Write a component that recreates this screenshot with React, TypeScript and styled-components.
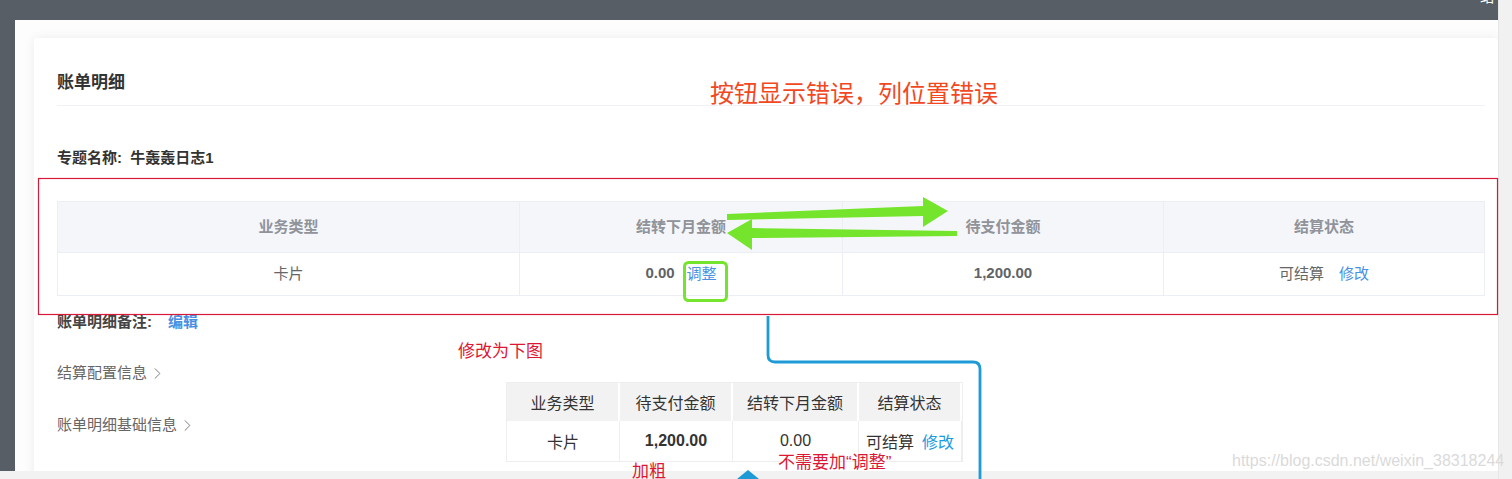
import React from "react";
import styled, { createGlobalStyle } from "styled-components";
import { ChevronRight } from "lucide-react";

const GlobalStyle = createGlobalStyle`
  html, body {
    margin: 0;
    padding: 0;
    overflow: hidden;
    background: #f2f2f2;
  }
  * {
    box-sizing: border-box;
  }
`;

const FONT = `"Liberation Sans", "Noto Sans CJK SC", sans-serif`;

const Page = styled.div`
  position: relative;
  display: grid;
  grid-template-columns: 1fr 14px;
  width: 1512px;
  height: 479px;
  overflow: hidden;
  font-family: ${FONT};
  background: #f2f2f2;
`;

const Main = styled.div`
  display: flex;
  flex-direction: column;
  min-width: 0;
`;

const TopBar = styled.div`
  height: 20px;
  flex-shrink: 0;
  display: flex;
  justify-content: flex-end;
  padding-right: 4px;
  background: #575e66;
  overflow: hidden;
`;

const TopBarLabel = styled.span`
  margin-top: -13px;
  font-size: 14px;
  line-height: 20px;
  color: #fff;
`;

const Body = styled.div`
  display: flex;
  height: 451px;
  flex-shrink: 0;
  overflow: hidden;
`;

const SideStrip = styled.div`
  width: 15px;
  flex-shrink: 0;
  background: #575e66;
`;

const Workspace = styled.div`
  flex: 1;
  min-width: 0;
  padding: 18px 0 0 19px;
  background: #fdfdfd;
`;

const Card = styled.div`
  height: 520px;
  padding: 0 13px 0 23px;
  background: #fff;
  border-radius: 3px;
  box-shadow: 0 0 12px rgba(0, 0, 0, 0.07);
  color: #333;
`;

const CardTitle = styled.div`
  padding: 33px 0 10px;
  font-size: 17px;
  line-height: 24px;
  font-weight: 700;
  color: #333;
  border-bottom: 1px solid #f0f1f4;
`;

const SubjectLine = styled.div`
  margin-top: 42px;
  font-size: 15px;
  line-height: 20px;
  font-weight: 700;
  color: #333;
`;

const BillTable = styled.div`
  margin-top: 33px;
  display: grid;
  grid-template-columns: 462px 323px 321px 1fr;
  border-top: 1px solid #ebeef5;
  border-left: 1px solid #ebeef5;
`;

const HeadCell = styled.div`
  height: 51px;
  padding-bottom: 3px;
  display: flex;
  align-items: center;
  justify-content: center;
  background: #f5f6fa;
  border-right: 1px solid #ebeef5;
  border-bottom: 1px solid #ebeef5;
  font-size: 15px;
  font-weight: 700;
  color: #909399;
`;

const BodyCell = styled.div<{ $gap?: number }>`
  height: 43px;
  padding-bottom: 4px;
  display: flex;
  align-items: center;
  justify-content: center;
  gap: ${(p) => p.$gap ?? 0}px;
  border-right: 1px solid #ebeef5;
  border-bottom: 1px solid #ebeef5;
  font-size: 15px;
  color: #666;
`;

const Amount = styled.span`
  font-weight: 700;
  color: #606266;
`;

const TextLink = styled.span<{ $bold?: boolean }>`
  color: #4a90e2;
  font-weight: ${(p) => (p.$bold ? 700 : 400)};
  cursor: pointer;
`;

const RemarkRow = styled.div`
  margin-top: 16px;
  display: flex;
  gap: 16px;
  font-size: 15px;
  line-height: 20px;
  font-weight: 700;
  color: #444;
`;

const SectionLink = styled.div<{ $top: number }>`
  margin-top: ${(p) => p.$top}px;
  display: flex;
  align-items: center;
  gap: 1px;
  font-size: 15px;
  line-height: 20px;
  color: #666;
`;

const ScrollTrack = styled.div`
  background: #f1f1f1;
  border-left: 1px solid #e6e6e6;
`;

/* annotation layer: drawn on top of the screenshot */
const Overlay = styled.svg`
  position: absolute;
  left: 0;
  top: 0;
  pointer-events: none;
`;

const Note = styled.div<{ $x: number; $y: number; $size: number; $color: string }>`
  position: absolute;
  left: ${(p) => p.$x}px;
  top: ${(p) => p.$y}px;
  font-size: ${(p) => p.$size}px;
  line-height: ${(p) => p.$size + 4}px;
  color: ${(p) => p.$color};
  white-space: nowrap;
  font-family: "Liberation Sans", "Noto Sans CJK SC", sans-serif;
`;

const Watermark = styled.div`
  position: absolute;
  left: 1232px;
  top: 451px;
  font-family: "Liberation Sans", sans-serif;
  font-size: 16px;
  line-height: 20px;
  color: #dadada;
  white-space: nowrap;
`;

/* the pasted "should look like this" table */
const Pasted = styled.div`
  position: absolute;
  left: 506px;
  top: 382px;
  display: grid;
  grid-template-columns: 113px 113px 126px 103px;
  background: #fff;
  border: 1px solid #eeeeee;
  font-family: "Noto Sans CJK SC", sans-serif;
`;

const PastedHead = styled.div`
  height: 38px;
  display: flex;
  align-items: center;
  justify-content: center;
  background: #f2f2f2;
  border-right: 2px solid #fff;
  font-size: 16px;
  color: #333;
`;

const PastedCell = styled.div<{ $bold?: boolean }>`
  height: 40px;
  display: flex;
  align-items: center;
  justify-content: center;
  gap: 8px;
  border-right: 1px solid #eeeeee;
  font-family: ${FONT};
  font-size: 16px;
  font-weight: ${(p) => (p.$bold ? 700 : 400)};
  color: #333;
`;

const PastedLink = styled.span`
  color: #1a9be0;
`;

const headers = ["业务类型", "结转下月金额", "待支付金额", "结算状态"];
const pastedHeaders = ["业务类型", "待支付金额", "结转下月金额", "结算状态"];

export default function App() {
  return (
    <>
      <GlobalStyle />
      <Page>
        <Main>
          <TopBar>
            <TopBarLabel>站</TopBarLabel>
          </TopBar>
          <Body>
            <SideStrip />
            <Workspace>
              <Card>
                <CardTitle>账单明细</CardTitle>
                <SubjectLine>专题名称:&nbsp; 牛轰轰日志1</SubjectLine>
                <BillTable>
                  {headers.map((h) => (
                    <HeadCell key={h}>{h}</HeadCell>
                  ))}
                  <BodyCell>卡片</BodyCell>
                  <BodyCell $gap={12}>
                    <Amount>0.00</Amount>
                    <TextLink>调整</TextLink>
                  </BodyCell>
                  <BodyCell>
                    <Amount>1,200.00</Amount>
                  </BodyCell>
                  <BodyCell $gap={15}>
                    <span>可结算</span>
                    <TextLink>修改</TextLink>
                  </BodyCell>
                </BillTable>
                <RemarkRow>
                  <span>账单明细备注:</span>
                  <TextLink $bold>编辑</TextLink>
                </RemarkRow>
                <SectionLink $top={31}>
                  结算配置信息
                  <ChevronRight size={19} strokeWidth={1.2} color="#777" />
                </SectionLink>
                <SectionLink $top={32}>
                  账单明细基础信息
                  <ChevronRight size={19} strokeWidth={1.2} color="#777" />
                </SectionLink>
              </Card>
            </Workspace>
          </Body>
        </Main>
        <ScrollTrack />

        <Note $x={710} $y={80} $size={24} $color="#f2481f">
          按钮显示错误，列位置错误
        </Note>
        <Note $x={458} $y={341} $size={17} $color="#dc1733">
          修改为下图
        </Note>

        <Pasted>
          {pastedHeaders.map((h) => (
            <PastedHead key={h}>{h}</PastedHead>
          ))}
          <PastedCell>卡片</PastedCell>
          <PastedCell $bold>1,200.00</PastedCell>
          <PastedCell>0.00</PastedCell>
          <PastedCell>
            可结算<PastedLink>修改</PastedLink>
          </PastedCell>
        </Pasted>

        <Note $x={778} $y={452} $size={17} $color="#dc1733">
          不需要加“调整”
        </Note>
        <Note $x={632} $y={461} $size={17} $color="#dc1733">
          加粗
        </Note>
        <Watermark>https://blog.csdn.net/weixin_38318244</Watermark>

        <Overlay width={1512} height={479} viewBox="0 0 1512 479">
          <rect x={38.5} y={178.5} width={1459} height={136} fill="none" stroke="#d8193a" strokeWidth={1.2} />
          <polygon
            points="727,214 923,206 923,197 948,211 923,227 923,216 727,220"
            fill="#74e52c"
          />
          <polygon
            points="957,231 752,228 752,219 727,233 752,250 752,238 957,236"
            fill="#74e52c"
          />
          <rect x={684.5} y={262.5} width={42} height={38} rx={4} fill="none" stroke="#74e52c" strokeWidth={3} />
          <path
            d="M768 316 V355 Q768 362 775 362 H973 Q980 362 980 369 V479"
            fill="none"
            stroke="#1e9bd7"
            strokeWidth={2.8}
          />
          <polygon points="748,470 759,479 737,479" fill="#1e9bd7" />
        </Overlay>
      </Page>
    </>
  );
}
